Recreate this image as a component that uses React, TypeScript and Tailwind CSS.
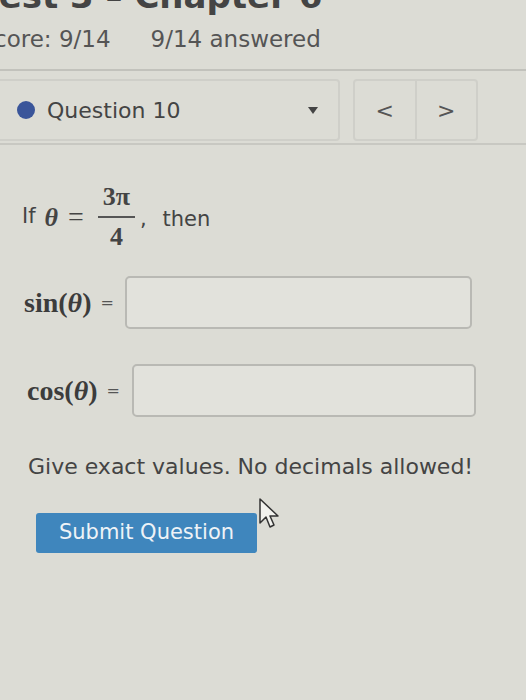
import * as React from "react";

const sans = "font-['DejaVu_Sans',sans-serif]";
const serif = "font-['Liberation_Serif','DejaVu_Serif',serif]";

function AnswerRow({ fn, indent, gap }: { fn: string; indent: string; gap: string }) {
  return (
    <div className={`flex items-center ${indent}`}>
      <span className={`${serif} text-[28px] font-bold text-[#3c3c3c]`}>
        {fn}(<i>θ</i>)
      </span>
      <span className={`${sans} ml-[9px] text-[16px] text-[#555]`}>=</span>
      <div className={`${gap} h-[53px] flex-1 rounded-[5px] border-2 border-[#b9b9b4] bg-[#e2e2dc]`} />
    </div>
  );
}

export default function App() {
  return (
    <div className={`${sans} h-[700px] w-[526px] overflow-hidden bg-[#dcdcd5] text-[#4a4a4a]`}>
      {/* page title, mostly scrolled off the top */}
      <div className="-ml-[20px] -mt-[22px] h-[36px] whitespace-nowrap text-[34px] font-bold leading-[36px] text-[#444]">
        Test 3 – Chapter 6
      </div>

      <div className="-ml-[6px] mt-[12px] flex h-[27px] items-center gap-[40px] text-[23px] text-[#555]">
        <span>core: 9/14</span>
        <span>9/14 answered</span>
      </div>

      <div className="mt-[16px] h-[2px] bg-[#c2c2bc]" />

      <div className="mt-[8px] flex items-center">
        <div className="flex h-[62px] w-[340px] items-center rounded-r-[4px] border-2 border-l-0 border-[#cfcfc9] pl-[17px] pr-[20px]">
          <span className="h-[18px] w-[18px] rounded-full bg-[#3a559a]" />
          <span className="ml-[12px] text-[22px] text-[#444]">Question 10</span>
          <span className="ml-auto h-0 w-0 border-x-[5px] border-t-[7px] border-x-transparent border-t-[#444]" />
        </div>
        <div className="ml-[13px] flex h-[62px] w-[125px] rounded-[4px] border-2 border-[#cfcfc9]">
          <div className="flex flex-1 items-center justify-center border-r-2 border-[#cfcfc9] text-[22px] text-[#555]">
            &lt;
          </div>
          <div className="flex flex-1 items-center justify-center text-[22px] text-[#555]">&gt;</div>
        </div>
      </div>

      <div className="mt-[2px] h-[2px] bg-[#c8c8c2]" />

      <div className="ml-[22px] mt-[39px] flex items-center text-[21px] text-[#444]">
        <span>If</span>
        <i className={`${serif} ml-[9px] text-[26px] font-semibold`}>θ</i>
        <span className={`${serif} ml-[10px] text-[28px]`}>=</span>
        <span className={`${serif} ml-[14px] flex flex-col items-center text-[26px] font-bold leading-[26px]`}>
          <span>3π</span>
          <span className="my-[6px] h-[2px] w-[37px] bg-[#555]" />
          <span>4</span>
        </span>
        <span className="ml-[5px] mt-[6px]">,</span>
        <span className="ml-[16px] mt-[6px]">then</span>
      </div>

      <div className="mt-[26px] pr-[54px]">
        <AnswerRow fn="sin" indent="pl-[24px]" gap="ml-[11px]" />
      </div>
      <div className="mt-[35px] pr-[50px]">
        <AnswerRow fn="cos" indent="pl-[27px]" gap="ml-[12px]" />
      </div>

      <div className="ml-[28px] mt-[33px] text-[22px] leading-[33px] text-[#444]">
        Give exact values. No decimals allowed!
      </div>

      <div className="ml-[36px] mt-[30px] flex items-start">
        <button className="h-[40px] w-[221px] rounded-[3px] bg-[#3f86bd] text-[21px] text-[#eef3f7]">
          Submit Question
        </button>
        <svg width="24" height="34" viewBox="0 0 24 34" className="-mt-[16px] ml-[1px]">
          <path
            d="M2 2 L2 26 L8 20 L12 30 L16 28 L12 19 L20 19 Z"
            fill="#f2f2ee"
            stroke="#333"
            strokeWidth="1.5"
            strokeLinejoin="round"
          />
        </svg>
      </div>
    </div>
  );
}
